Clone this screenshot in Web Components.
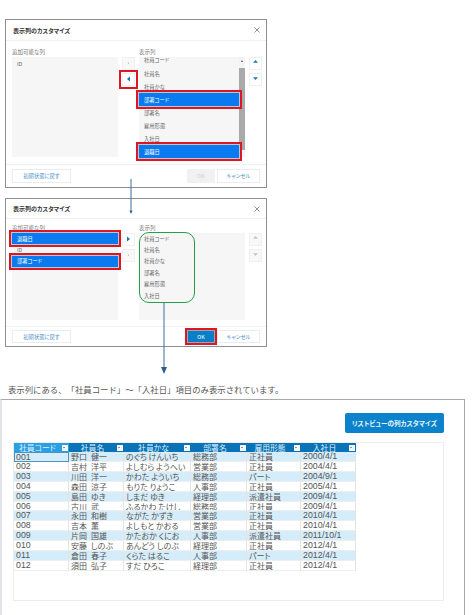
<!DOCTYPE html>
<html lang="ja">
<head>
<meta charset="utf-8">
<title>表示列のカスタマイズ</title>
<style>
  html, body { margin: 0; background: #fff; overflow: hidden; }
  body { font-family: "Liberation Sans", "Noto Sans CJK JP", sans-serif; }
</style>
</head>
<body>
<manual-page>
  <column-dialog style="--head:20px;--label-pad:7px;--list-h:100px;--row:13px;--foot-gap:7px;--foot-pad:4px;--btn-h:14px">
    <list-box slot="available"><list-option>ID</list-option></list-box>
    <icon-button slot="move" dir="dot" tone="off"></icon-button>
    <icon-button slot="move" dir="left" marked></icon-button>
    <list-box slot="display" scrollbar>
      <list-option cut>社員コード</list-option>
      <list-option>社員名</list-option>
      <list-option>社員かな</list-option>
      <list-option selected marked>部署コード</list-option>
      <list-option>部署名</list-option>
      <list-option>雇用形態</list-option>
      <list-option>入社日</list-option>
      <list-option selected marked>退職日</list-option>
    </list-box>
    <icon-button slot="order" dir="up"></icon-button>
    <icon-button slot="order" dir="down"></icon-button>
    <plain-button slot="reset" style="width:59px">初期状態に戻す</plain-button>
    <plain-button slot="ok" kind="off" style="width:28px">OK</plain-button>
    <plain-button slot="cancel" style="width:43px">キャンセル</plain-button>
  </column-dialog>

  <column-dialog style="margin-top:10px;--head:19px;--label-pad:5px;--list-h:87px;--row:11.4px;--foot-gap:6px;--foot-pad:3px;--btn-h:13px">
    <list-box slot="available">
      <list-option selected marked>退職日</list-option>
      <list-option>ID</list-option>
      <list-option selected marked>部署コード</list-option>
    </list-box>
    <icon-button slot="move" dir="right"></icon-button>
    <icon-button slot="move" dir="dot" tone="off"></icon-button>
    <list-box slot="display" circled>
      <list-option>社員コード</list-option>
      <list-option>社員名</list-option>
      <list-option>社員かな</list-option>
      <list-option>部署名</list-option>
      <list-option>雇用形態</list-option>
      <list-option>入社日</list-option>
    </list-box>
    <icon-button slot="order" dir="up" tone="off"></icon-button>
    <icon-button slot="order" dir="down" tone="off"></icon-button>
    <plain-button slot="reset" style="width:59px">初期状態に戻す</plain-button>
    <plain-button slot="ok" kind="primary" marked style="width:28px">OK</plain-button>
    <plain-button slot="cancel" style="width:43px">キャンセル</plain-button>
  </column-dialog>

  <note-line>表示列にある、「社員コード」～「入社日」項目のみ表示されています。</note-line>

  <result-panel>
    <plain-button slot="action" kind="action">リストビューの列カスタマイズ</plain-button>
    <employee-sheet></employee-sheet>
  </result-panel>

  <flow-arrow style="left:128px;top:179px;width:6px;height:35px"></flow-arrow>
  <flow-arrow big style="left:161px;top:302px;width:6px;height:72px"></flow-arrow>
</manual-page>

<script>
class ManualPage extends HTMLElement {
  constructor() {
    super();
    this.attachShadow({ mode: "open" });
    this.shadowRoot.innerHTML = `
      <style>
        :host { display: block; position: relative; width: 474px; height: 615px; padding-top: 19px; box-sizing: border-box; }
      </style>
      <slot></slot>
    `;
  }
}

class ColumnDialog extends HTMLElement {
  constructor() {
    super();
    this.attachShadow({ mode: "open" });
    this.shadowRoot.innerHTML = `
      <style>
        :host {
          display: block;
          width: 262px;
          margin-left: 5px;
          box-sizing: border-box;
          border: 1px solid #8b8f92;
          background: #fff;
          font-family: "Noto Sans CJK JP", "Liberation Sans", sans-serif;
          font-feature-settings: "palt";
          color: #666;
        }
        header {
          height: var(--head);
          border-bottom: 1px solid #f1f1f1;
          display: flex;
          align-items: center;
          justify-content: space-between;
          padding: 0 6px 0 7px;
        }
        h2 { margin: 0; font-size: 6px; font-weight: 700; color: #333; }
        svg { display: block; }
        .body {
          display: grid;
          grid-template-columns: 106px 13px 106px 13px;
          grid-template-rows: 8px var(--list-h);
          column-gap: 4px;
          row-gap: 1px;
          padding: var(--label-pad) 6px var(--foot-gap);
        }
        .label { font-size: 5.5px; line-height: 8px; color: #777; }
        .tools { display: flex; flex-direction: column; gap: 3px; }
        .tools.move { margin-right: -2px; }
        footer {
          border-top: 1px solid #f1f1f1;
          padding: var(--foot-pad) 6px;
          display: flex;
          gap: 2px;
        }
        .reset { margin-right: auto; }
      </style>
      <header>
        <h2>表示列のカスタマイズ</h2>
        <svg width="6" height="6" viewBox="0 0 6 6"><path d="M.5.5l5 5M5.5.5l-5 5" stroke="#777" stroke-width=".8" fill="none"/></svg>
      </header>
      <div class="body">
        <div class="label">追加可能な列</div>
        <div></div>
        <div class="label">表示列</div>
        <div></div>
        <slot name="available"></slot>
        <div class="tools move"><slot name="move"></slot></div>
        <slot name="display"></slot>
        <div class="tools"><slot name="order"></slot></div>
      </div>
      <footer>
        <div class="reset"><slot name="reset"></slot></div>
        <slot name="ok"></slot>
        <slot name="cancel"></slot>
      </footer>
    `;
  }
}

class ListBox extends HTMLElement {
  constructor() {
    super();
    this.attachShadow({ mode: "open" });
    this.shadowRoot.innerHTML = `
      <style>
        :host { display: flex; position: relative; background: #f6f6f6; }
        .rows { flex: 1; min-width: 0; }
        .bar { display: none; width: 6px; flex: none; flex-direction: column; align-items: center; background: #f3f3f3; }
        :host([scrollbar]) .bar { display: flex; }
        .up { width: 0; height: 0; margin-top: 3px; border: 1.5px solid transparent; border-top: 0; border-bottom: 2px solid #555; }
        .thumb { width: 100%; height: 82px; margin-top: 6px; background: #a9a9a9; }
        .ring { display: none; position: absolute; left: 0; top: -1px; width: 56px; height: 71px; box-sizing: border-box; border: 1.5px solid #25a04a; border-radius: 10px; }
        :host([circled]) .ring { display: block; }
      </style>
      <div class="rows"><slot></slot></div>
      <div class="bar"><div class="up"></div><div class="thumb"></div></div>
      <div class="ring"></div>
    `;
  }
}

class ListOption extends HTMLElement {
  constructor() {
    super();
    this.attachShadow({ mode: "open" });
    this.shadowRoot.innerHTML = `
      <style>
        :host {
          display: flex;
          position: relative;
          height: var(--row);
          align-items: center;
          padding-left: 5px;
          font-size: 5.3px;
          color: #666;
        }
        :host([cut]) { height: 10px; align-items: flex-start; overflow: hidden; }
        :host([cut]) span { margin-top: -1px; }
        :host([selected]) { background: #0a7af0; color: #fff; }
        :host([marked]) { outline: 2px solid #e01522; outline-offset: 1px; box-shadow: 0 0 0 1px #b9c6d4; }
      </style>
      <span><slot></slot></span>
    `;
  }
}

class IconButton extends HTMLElement {
  static shapes = {
    up: "M4 5.8L6.5 3 9 5.8z",
    down: "M4 4.2L6.5 7 9 4.2z",
    left: "M8 3.5L5 6 8 8.5z",
    right: "M5 3.5L8 6 5 8.5z",
    dot: "M6 5.5h1v1.5h-1z",
  };

  constructor() {
    super();
    this.attachShadow({ mode: "open" });
  }

  connectedCallback() {
    const d = IconButton.shapes[this.getAttribute("dir")];
    this.shadowRoot.innerHTML = `
      <style>
        :host { display: block; width: 13px; height: 13px; box-sizing: border-box; border: 1px solid #f0f0f0; background: #fff; color: #1877b8; }
        :host([tone="off"]) { background: #f8f8f8; color: #c4c4c4; }
        :host([marked]) { outline: 2px solid #e01522; outline-offset: 1px; }
        svg { display: block; margin: -1px; }
      </style>
      <svg width="13" height="13" viewBox="0 0 13 13"><path d="${d}" fill="currentColor"/></svg>
    `;
  }
}

class PlainButton extends HTMLElement {
  constructor() {
    super();
    this.attachShadow({ mode: "open" });
    this.shadowRoot.innerHTML = `
      <style>
        :host {
          display: flex;
          align-items: center;
          justify-content: center;
          height: var(--btn-h);
          box-sizing: border-box;
          border: 1px solid #e6eef4;
          background: #fff;
          color: #4a8fc4;
          font-size: 5.3px;
        }
        :host([kind="off"]) { background: #f1f1f1; border-color: #f1f1f1; color: #cfcfcf; }
        :host([kind="primary"]) { background: #0a7fc8; border-color: #8fa9bb; color: #fff; }
        :host([marked]) { outline: 2px solid #e01522; outline-offset: 0; }
        :host([kind="action"]) {
          width: 99px;
          height: 20px;
          margin-left: auto;
          border: 0;
          border-radius: 2px;
          background: #0a83cc;
          color: #e8f4fc;
          font-family: "Noto Sans CJK JP", sans-serif;
          font-feature-settings: "palt";
          font-size: 6.6px;
          font-weight: 700;
        }
      </style>
      <slot></slot>
    `;
  }
}

class NoteLine extends HTMLElement {
  constructor() {
    super();
    this.attachShadow({ mode: "open" });
    this.shadowRoot.innerHTML = `
      <style>
        :host {
          display: block;
          margin: 36px 0 4px 8px;
          font-family: "Noto Sans CJK JP", sans-serif;
          font-size: 8.4px;
          line-height: 12px;
          color: #555;
          white-space: nowrap;
          text-spacing-trim: space-all;
        }
      </style>
      <slot></slot>
    `;
  }
}

class ResultPanel extends HTMLElement {
  constructor() {
    super();
    this.attachShadow({ mode: "open" });
    this.shadowRoot.innerHTML = `
      <style>
        :host {
          display: block;
          width: 465px;
          height: 217px;
          box-sizing: border-box;
          border-top: 1px solid #a9a9a9;
          border-right: 1px solid #a9a9a9;
          border-left: 2px solid #e2e3e6;
          padding: 13px 20px 0 11px;
        }
        .top { display: flex; margin-bottom: 9px; }
      </style>
      <div class="top"><slot name="action"></slot></div>
      <slot></slot>
    `;
  }
}

const sheetColumns = ["社員コード", "社員名", "社員かな", "部署名", "雇用形態", "入社日"];
const sheetRows = [
  ["001", "野口 健一", "のぐち けんいち", "総務部", "正社員", "2000/4/1"],
  ["002", "吉村 洋平", "よしむら ようへい", "営業部", "正社員", "2004/4/1"],
  ["003", "川田 洋一", "かわた よういち", "総務部", "パート", "2004/9/1"],
  ["004", "森田 涼子", "もりた りょうこ", "人事部", "正社員", "2005/4/1"],
  ["005", "島田 ゆき", "しまだ ゆき", "経理部", "派遣社員", "2009/4/1"],
  ["006", "古川 武", "ふるかわ たけし", "総務部", "正社員", "2009/4/1"],
  ["007", "永田 和樹", "ながた かずき", "営業部", "正社員", "2010/4/1"],
  ["008", "吉本 薫", "よしもと かおる", "営業部", "正社員", "2010/4/1"],
  ["009", "片岡 国雄", "かたおか くにお", "人事部", "派遣社員", "2011/10/1"],
  ["010", "安藤 しのぶ", "あんどう しのぶ", "経理部", "正社員", "2012/4/1"],
  ["011", "倉田 春子", "くらた はるこ", "人事部", "パート", "2012/4/1"],
  ["012", "須田 弘子", "すだ ひろこ", "経理部", "正社員", "2012/4/1"],
];

class EmployeeSheet extends HTMLElement {
  constructor() {
    super();
    this.attachShadow({ mode: "open" });
  }

  connectedCallback() {
    const head = sheetColumns
      .map((name, i) => `<div class="th ${i === 0 ? "first" : ""}"><span>${name}</span><i></i></div>`)
      .join("");
    const rows = sheetRows
      .map((row, r) => row
        .map((text, c) => {
          const classes = ["td"];
          if (r % 2 === 0) classes.push("odd");
          if (r === 0 && c === 0) classes.push("cur");
          if (c === 0 || c === 5) classes.push("num");
          if (c === 1) classes.push("name");
          return `<div class="${classes.join(" ")}">${text}</div>`;
        })
        .join(""))
      .join("");
    this.shadowRoot.innerHTML = `
      <style>
        :host {
          display: block;
          width: 431px;
          height: 159px;
          box-sizing: border-box;
          border: 1px solid #ececec;
          font-family: "Noto Sans CJK JP", sans-serif;
          font-feature-settings: "palt";
        }
        .grid {
          display: grid;
          width: 342px;
          grid-template-columns: 55px 55px 67px 56px 54px 55px;
          grid-template-rows: 9px repeat(12, 9.92px);
        }
        .th {
          position: relative;
          display: flex;
          align-items: center;
          justify-content: center;
          padding-right: 8px;
          background: #0a72b6;
          color: #dff0fb;
          font-size: 7.8px;
          line-height: 9px;
          overflow: hidden;
        }
        .th.first { background: #2a9fe4; }
        .th i {
          position: absolute;
          right: 1px;
          top: 2px;
          width: 6.5px;
          height: 6px;
          background: #f4f8fb;
        }
        .th i::after {
          content: "";
          position: absolute;
          left: 1.7px;
          top: 2.2px;
          border: 1.5px solid transparent;
          border-bottom: 0;
          border-top: 1.5px solid #333;
        }
        .td {
          box-sizing: border-box;
          padding-left: 2px;
          border-right: 1px solid #e4e4e4;
          border-bottom: 1px solid #eeeeee;
          font-size: 8px;
          line-height: 9px;
          color: #555;
          white-space: nowrap;
          overflow: hidden;
        }
        .td.name { word-spacing: 2.2px; }
        .td.num { font-family: "Liberation Sans", sans-serif; font-size: 8.8px; }
        .td.odd { background: #d5edfb; }
        .td.cur { border: 1px solid #4d93c1; padding-left: 1px; line-height: 8px; }
      </style>
      <div class="grid">${head}${rows}</div>
    `;
  }
}

class FlowArrow extends HTMLElement {
  constructor() {
    super();
    this.attachShadow({ mode: "open" });
  }

  connectedCallback() {
    const h = parseFloat(this.style.height);
    const head = this.hasAttribute("big") ? 7 : 3.5;
    const half = this.hasAttribute("big") ? 3 : 1.6;
    this.shadowRoot.innerHTML = `
      <style>
        :host { display: block; position: absolute; }
        svg { display: block; }
      </style>
      <svg width="6" height="${h}" viewBox="0 0 6 ${h}">
        <path d="M3 0V${h - head}" stroke="#3d6f9a" stroke-width="1" fill="none"/>
        <path d="M${3 - half} ${h - head}H${3 + half}L3 ${h}z" fill="#2c5f8c"/>
      </svg>
    `;
  }
}

customElements.define("manual-page", ManualPage);
customElements.define("column-dialog", ColumnDialog);
customElements.define("list-box", ListBox);
customElements.define("list-option", ListOption);
customElements.define("icon-button", IconButton);
customElements.define("plain-button", PlainButton);
customElements.define("note-line", NoteLine);
customElements.define("result-panel", ResultPanel);
customElements.define("employee-sheet", EmployeeSheet);
customElements.define("flow-arrow", FlowArrow);
</script>
</body>
</html>
